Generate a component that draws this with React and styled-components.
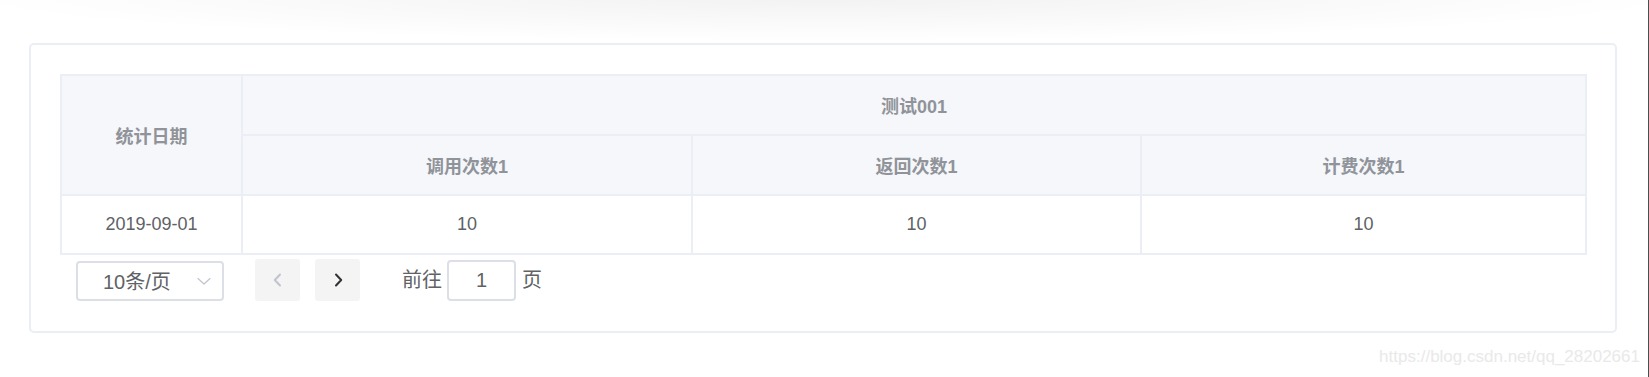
import React from 'react';
import styled, { createGlobalStyle } from 'styled-components';

const GlobalStyle = createGlobalStyle`
  html, body {
    margin: 0;
    padding: 0;
    background: #fff;
  }
  body {
    font-family: "Liberation Sans", "Noto Sans CJK SC", sans-serif;
  }
`;

// Full window, with the faint shadow of a header above and the window edge on the right
const Page = styled.div`
  position: relative;
  box-sizing: border-box;
  width: 1649px;
  height: 377px;
  padding: 43px 32px 0 29px;
  border-right: 1px solid #4d4d4d;
  background:
    radial-gradient(ellipse 880px 48px at 50% -6px, rgba(0, 0, 0, 0.055), rgba(0, 0, 0, 0) 100%),
    #fff;
`;

const Card = styled.div`
  box-sizing: border-box;
  width: 1588px;
  height: 290px;
  padding: 29px 28px 0 29px;
  border: 2px solid #ebeef5;
  border-radius: 5px;
  background: #fff;
`;

const Table = styled.table`
  width: 1527px;
  table-layout: fixed;
  border-collapse: collapse;
  font-size: 18px;
`;

const HeadCell = styled.th`
  height: 58px;
  padding: 0;
  border: 2px solid #ebeef5;
  background: #f5f7fa;
  color: #909399;
  font-weight: bold;
  text-align: center;
`;

const Cell = styled.td`
  height: 57px;
  padding: 0;
  border: 2px solid #ebeef5;
  color: #606266;
  text-align: center;
`;

const Pager = styled.div`
  display: flex;
  align-items: center;
  margin-top: 4px;
  padding-left: 16px;
  font-size: 20px;
  color: #606266;
`;

const SizeSelect = styled.div`
  box-sizing: border-box;
  display: flex;
  align-items: center;
  justify-content: space-between;
  width: 148px;
  height: 40px;
  padding: 0 11px 0 25px;
  margin-top: 1px;
  border: 2px solid #dcdfe6;
  border-radius: 4px;
`;

const NavButton = styled.button`
  box-sizing: border-box;
  display: flex;
  align-items: center;
  justify-content: center;
  width: 45px;
  height: 42px;
  margin-left: ${p => p.$gap}px;
  padding: 0;
  border: none;
  border-radius: 3px;
  background: #f4f4f5;
  color: ${p => (p.disabled ? '#c0c4cc' : '#303133')};
`;

const Label = styled.span`
  margin-left: ${p => p.$gap}px;
  line-height: 1;
`;

const JumpInput = styled.div`
  box-sizing: border-box;
  display: flex;
  align-items: center;
  justify-content: center;
  width: 69px;
  height: 41px;
  margin-left: 5px;
  margin-top: 1px;
  border: 2px solid #dcdfe6;
  border-radius: 4px;
  color: #606266;
`;

const Watermark = styled.div`
  position: absolute;
  right: 8px;
  bottom: 10px;
  font-family: "Liberation Sans", Arial, sans-serif;
  font-size: 17px;
  color: #e9e9e9;
`;

const Chevron = ({ dir, size = 14, width = 2 }) => (
  <svg width={size} height={size} viewBox="0 0 14 14" fill="none">
    <path
      d={dir === 'left' ? 'M9 1.5L3.8 7L9 12.5' : dir === 'right' ? 'M5 1.5L10.2 7L5 12.5' : 'M1 4.5L7 10L13 4.5'}
      stroke="currentColor"
      strokeWidth={width}
      strokeLinecap="round"
      strokeLinejoin="round"
    />
  </svg>
);

const rows = [{ date: '2019-09-01', calls: 10, returns: 10, billed: 10 }];

export default function App() {
  return (
    <>
      <GlobalStyle />
      <Page>
        <Card>
          <Table>
            <colgroup>
              <col style={{ width: 181 }} />
              <col style={{ width: 450 }} />
              <col style={{ width: 449 }} />
              <col />
            </colgroup>
            <thead>
              <tr>
                <HeadCell rowSpan={2}>统计日期</HeadCell>
                <HeadCell colSpan={3}>测试001</HeadCell>
              </tr>
              <tr>
                <HeadCell>调用次数1</HeadCell>
                <HeadCell>返回次数1</HeadCell>
                <HeadCell>计费次数1</HeadCell>
              </tr>
            </thead>
            <tbody>
              {rows.map(r => (
                <tr key={r.date}>
                  <Cell>{r.date}</Cell>
                  <Cell>{r.calls}</Cell>
                  <Cell>{r.returns}</Cell>
                  <Cell>{r.billed}</Cell>
                </tr>
              ))}
            </tbody>
          </Table>
          <Pager>
            <SizeSelect>
              <span>10条/页</span>
              <span style={{ color: '#c0c4cc', display: 'flex' }}>
                <Chevron dir="down" size={14} width={1.2} />
              </span>
            </SizeSelect>
            <NavButton $gap={31} disabled>
              <Chevron dir="left" />
            </NavButton>
            <NavButton $gap={15}>
              <Chevron dir="right" />
            </NavButton>
            <Label $gap={42}>前往</Label>
            <JumpInput>1</JumpInput>
            <Label $gap={6}>页</Label>
          </Pager>
        </Card>
        <Watermark>https://blog.csdn.net/qq_28202661</Watermark>
      </Page>
    </>
  );
}
